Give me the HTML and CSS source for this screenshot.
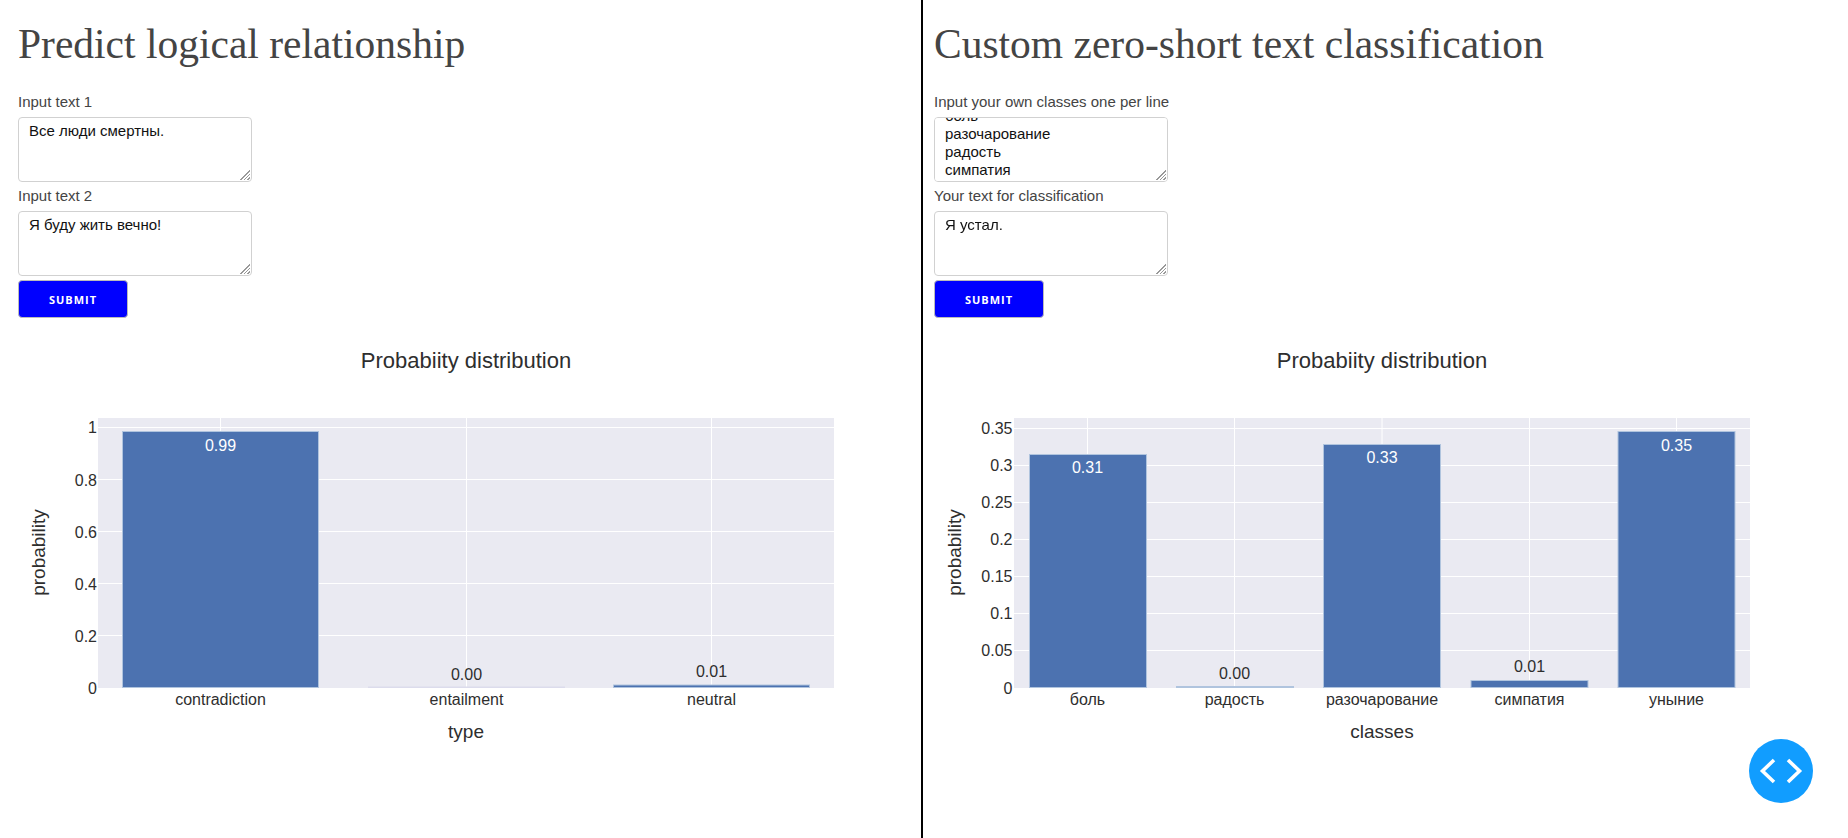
FILE: index.html
```html
<!DOCTYPE html>
<html lang="en">
<head>
    <meta charset="UTF-8">
    <title>Text classification</title>
    <link rel="stylesheet" href="styles.css">
</head>
<body>
    <div class="page">
        <div class="column column-left">
            <h2 class="heading">Predict logical relationship</h2>
            <label class="field-label">Input text 1</label>
            <div class="field-wrap">
                <textarea class="field">Все люди смертны.</textarea>
                <span class="grip"></span>
            </div>
            <label class="field-label">Input text 2</label>
            <div class="field-wrap">
                <textarea class="field">Я буду жить вечно!</textarea>
                <span class="grip"></span>
            </div>
            <button class="submit-btn">Submit</button>

            <svg class="chart" width="900" height="450" viewBox="18 330 900 450">
                <text class="chart-title" x="466" y="368">Probabiity distribution</text>
                <rect class="plot-bg" x="98" y="418" width="736" height="270"/>
                <g class="grid">
                    <line x1="220.5" y1="418" x2="220.5" y2="688"/>
                    <line x1="466.5" y1="418" x2="466.5" y2="688"/>
                    <line x1="711.5" y1="418" x2="711.5" y2="688"/>
                    <line x1="98" y1="427.5" x2="834" y2="427.5"/>
                    <line x1="98" y1="479.5" x2="834" y2="479.5"/>
                    <line x1="98" y1="531.5" x2="834" y2="531.5"/>
                    <line x1="98" y1="583.5" x2="834" y2="583.5"/>
                    <line x1="98" y1="635.5" x2="834" y2="635.5"/>
                </g>
                <g class="bars">
                    <rect x="122.5" y="431.5" width="196" height="256"/>
                    <rect class="bar-empty" x="368.5" y="687" width="196" height="0.5"/>
                    <rect x="613.5" y="685" width="196" height="2.5"/>
                </g>
                <text class="bar-label bar-label-in" x="220.5" y="451">0.99</text>
                <text class="bar-label" x="466.5" y="680">0.00</text>
                <text class="bar-label" x="711.5" y="677">0.01</text>
                <g class="y-ticks">
                    <text x="97" y="433">1</text>
                    <text x="97" y="486">0.8</text>
                    <text x="97" y="538">0.6</text>
                    <text x="97" y="590">0.4</text>
                    <text x="97" y="642">0.2</text>
                    <text x="97" y="694">0</text>
                </g>
                <g class="x-ticks">
                    <text x="220.5" y="705">contradiction</text>
                    <text x="466.5" y="705">entailment</text>
                    <text x="711.5" y="705">neutral</text>
                </g>
                <text class="axis-title" x="466" y="738">type</text>
                <text class="axis-title" transform="translate(44.5 552.5) rotate(-90)">probability</text>
            </svg>
        </div>

        <div class="column column-right">
            <h2 class="heading">Custom zero-short text classification</h2>
            <label class="field-label">Input your own classes one per line</label>
            <div class="field-wrap">
                <textarea class="field" id="classes-input">боль
разочарование
радость
симпатия
уныние</textarea>
                <span class="grip"></span>
            </div>
            <label class="field-label">Your text for classification</label>
            <div class="field-wrap">
                <textarea class="field">Я устал.</textarea>
                <span class="grip"></span>
            </div>
            <button class="submit-btn">Submit</button>

            <svg class="chart" width="900" height="450" viewBox="934 330 900 450">
                <text class="chart-title" x="1382" y="368">Probabiity distribution</text>
                <rect class="plot-bg" x="1014" y="418" width="736" height="270"/>
                <g class="grid">
                    <line x1="1087.5" y1="418" x2="1087.5" y2="688"/>
                    <line x1="1234.5" y1="418" x2="1234.5" y2="688"/>
                    <line x1="1382" y1="418" x2="1382" y2="688"/>
                    <line x1="1529.5" y1="418" x2="1529.5" y2="688"/>
                    <line x1="1676.5" y1="418" x2="1676.5" y2="688"/>
                    <line x1="1014" y1="428.5" x2="1750" y2="428.5"/>
                    <line x1="1014" y1="465.5" x2="1750" y2="465.5"/>
                    <line x1="1014" y1="502.5" x2="1750" y2="502.5"/>
                    <line x1="1014" y1="539.5" x2="1750" y2="539.5"/>
                    <line x1="1014" y1="576.5" x2="1750" y2="576.5"/>
                    <line x1="1014" y1="613.5" x2="1750" y2="613.5"/>
                    <line x1="1014" y1="650.5" x2="1750" y2="650.5"/>
                </g>
                <g class="bars">
                    <rect x="1029.5" y="454.5" width="117" height="233"/>
                    <rect x="1176.5" y="686.5" width="117" height="1"/>
                    <rect x="1323.5" y="444.5" width="117" height="243"/>
                    <rect x="1471" y="680.5" width="117" height="7"/>
                    <rect x="1618" y="431.5" width="117" height="256"/>
                </g>
                <text class="bar-label bar-label-in" x="1087.5" y="473">0.31</text>
                <text class="bar-label" x="1234.5" y="679">0.00</text>
                <text class="bar-label bar-label-in" x="1382" y="463">0.33</text>
                <text class="bar-label" x="1529.5" y="672">0.01</text>
                <text class="bar-label bar-label-in" x="1676.5" y="451">0.35</text>
                <g class="y-ticks">
                    <text x="1012.5" y="434">0.35</text>
                    <text x="1012.5" y="471">0.3</text>
                    <text x="1012.5" y="508">0.25</text>
                    <text x="1012.5" y="545">0.2</text>
                    <text x="1012.5" y="582">0.15</text>
                    <text x="1012.5" y="619">0.1</text>
                    <text x="1012.5" y="656">0.05</text>
                    <text x="1012.5" y="694">0</text>
                </g>
                <g class="x-ticks">
                    <text x="1087.5" y="705">боль</text>
                    <text x="1234.5" y="705">радость</text>
                    <text x="1382" y="705">разочарование</text>
                    <text x="1529.5" y="705">симпатия</text>
                    <text x="1676.5" y="705">уныние</text>
                </g>
                <text class="axis-title" x="1382" y="738">classes</text>
                <text class="axis-title" transform="translate(960.5 552.5) rotate(-90)">probability</text>
            </svg>
        </div>
    </div>

    <div class="debug-btn">
        <svg width="64" height="64" viewBox="0 0 64 64">
            <path d="M25 21 L13.5 32 L25 43 M39 21 L50.5 32 L39 43"/>
        </svg>
    </div>

    <script src="script.js"></script>
</body>
</html>
```

FILE: styles.css
```css
* {
    box-sizing: border-box;
}

html, body {
    margin: 0;
    height: 100%;
    overflow: hidden;
}

body {
    font-family: 'Liberation Sans', Arial, sans-serif;
    font-size: 15px;
    color: #444;
    background: white;
}

.page {
    display: flex;
    height: 100vh;
}

.column {
    display: flex;
    flex-direction: column;
    align-items: flex-start;
}

.column-left {
    width: 923px;
    padding-left: 18px;
    border-right: 2px solid #000;
}

.column-right {
    flex: 1;
    padding-left: 11px;
}

.heading {
    margin: 18px 0 0;
    height: 70px;
    font-family: 'Liberation Serif', serif;
    font-size: 41.5px;
    font-weight: 400;
    line-height: 52px;
    color: #444;
}

.field-label {
    display: block;
    margin: 2px 0 3px;
    line-height: 24px;
}

.field-wrap {
    position: relative;
    width: 234px;
    height: 65px;
}

.field {
    display: block;
    width: 100%;
    height: 100%;
    padding: 4px 10px 6px;
    border: 1px solid #d1d1d1;
    border-radius: 4px;
    font-family: 'Liberation Sans', Arial, sans-serif;
    font-size: 15px;
    line-height: 18px;
    color: #111;
    background: white;
    resize: none;
    scrollbar-width: none;
}

/* drag handle in the corner of the textarea */
.grip {
    position: absolute;
    right: 2px;
    bottom: 2px;
    width: 11px;
    height: 11px;
    background: repeating-linear-gradient(135deg, #fff 0, #fff 1.2px, #999 1.2px, #999 2.4px);
    clip-path: polygon(100% 0, 100% 100%, 0 100%);
}

.submit-btn {
    width: 110px;
    height: 38px;
    margin-top: 4px;
    padding: 0;
    background: #00f;
    border: 1px solid #bbb;
    border-radius: 4px;
    color: white;
    font-family: 'Open Sans', sans-serif;
    font-size: 11px;
    font-weight: 700;
    letter-spacing: 1px;
    text-transform: uppercase;
}

.chart {
    display: block;
    margin-top: 12px;
    font-family: 'Liberation Sans', Arial, sans-serif;
}

.chart text {
    fill: #2e2e2e;
}

.chart-title {
    font-size: 22px;
    text-anchor: middle;
}

.plot-bg {
    fill: #eaeaf2;
}

.grid line {
    stroke: white;
    stroke-width: 1px;
}

.bars rect {
    fill: #4c72b0;
    stroke: #b0c4de;
    stroke-width: 1px;
}

.bars .bar-empty {
    fill: #eaeaf2;
    stroke: #dcdcec;
}

.chart .bar-label {
    font-size: 16px;
    text-anchor: middle;
}

.chart .bar-label-in {
    fill: white;
}

.y-ticks text {
    font-size: 16px;
    text-anchor: end;
}

.x-ticks text {
    font-size: 16px;
    text-anchor: middle;
}

.axis-title {
    font-size: 19px;
    text-anchor: middle;
}

.debug-btn {
    position: fixed;
    right: 35px;
    bottom: 35px;
    width: 64px;
    height: 64px;
    border-radius: 50%;
    background: #119dff;
}

.debug-btn svg {
    display: block;
}

.debug-btn path {
    fill: none;
    stroke: white;
    stroke-width: 3.6;
}
```

FILE: script.js
```js
document.getElementById('classes-input').scrollTop = 15;
```
